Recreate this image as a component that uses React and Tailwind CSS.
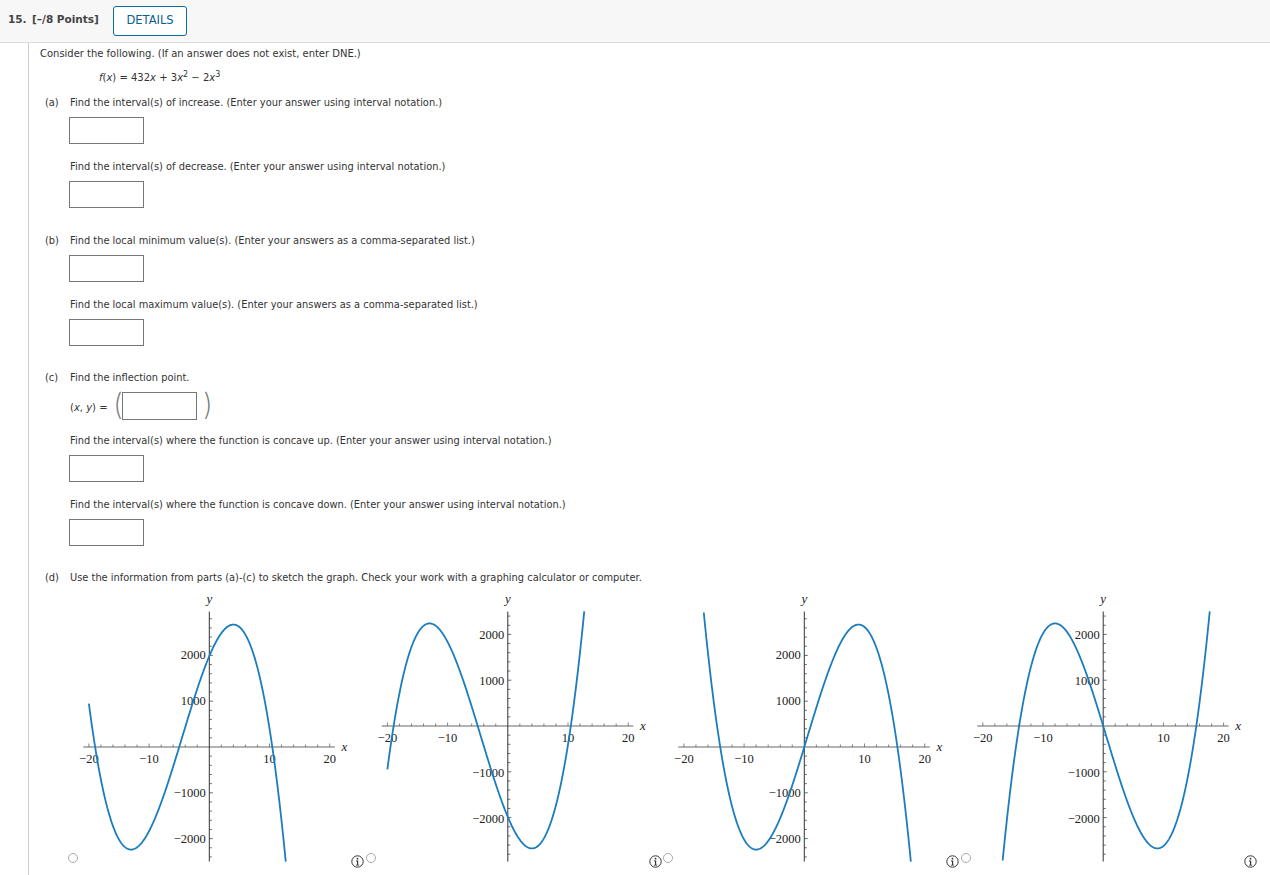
const f = (x) => 432 * x + 3 * x * x - 2 * x * x * x;

const GRAPHS = [
  { ox: 142.3, oy: 157, fn: (x) => f(x + 5), dy: 4 },
  { ox: 142.8, oy: 136, fn: (x) => -f(x + 5), dy: 5 },
  { ox: 142.3, oy: 157, fn: (x) => f(x), dy: 4 },
  { ox: 143.2, oy: 136, fn: (x) => -f(x), dy: 5 },
];

const SX = 6.02;
const SY = 0.0458;

function Graph({ ox, oy, fn, dy }) {
  const pts = [];
  for (let x = -20; x <= 20.001; x += 0.1) {
    const py = oy - fn(x) * SY;
    if (py >= 21 && py <= 272) pts.push(`${(ox + x * SX).toFixed(2)},${py.toFixed(2)}`);
  }
  const xTicks = [];
  for (let v = -20; v <= 20; v += 2) if (v !== 0) xTicks.push(v);
  const yTicks = [];
  for (let v = -5000; v <= 5000; v += 200) {
    const p = oy - v * SY;
    if (v !== 0 && p > 23 && p < 271) yTicks.push(v);
  }
  const fmt = (v) => (v < 0 ? `\u2212${-v}` : `${v}`);
  return (
    <svg width="297" height="285" className="block overflow-visible">
      <line x1={ox - 126} x2={ox + 125.5} y1={oy} y2={oy} stroke="#666" strokeWidth="1" />
      <line x1={ox} x2={ox} y1="21.5" y2="271.5" stroke="#333" strokeWidth="1" />
      {xTicks.map((v) => (
        <line key={v} x1={ox + v * SX} x2={ox + v * SX} y1={oy - (v % 10 === 0 ? 3.5 : 2.5)} y2={oy} stroke="#666" strokeWidth="0.8" />
      ))}
      {yTicks.map((v) => (
        <line key={v} x1={ox} x2={ox + (v % 1000 === 0 ? 3.5 : 2.5)} y1={oy - v * SY} y2={oy - v * SY} stroke="#444" strokeWidth="0.8" />
      ))}
      {[-20, -10, 10, 20].map((v) => (
        <text key={v} x={ox + v * SX} y={oy + 15.5} textAnchor="middle" fontSize="12.5" fill="#222" fontFamily="'Liberation Serif', serif">
          {fmt(v)}
        </text>
      ))}
      {[-2000, -1000, 1000, 2000].map((v) => (
        <text key={v} x={ox - 3.5} y={oy - v * SY + dy} textAnchor="end" fontSize="12.5" fill="#222" fontFamily="'Liberation Serif', serif">
          {fmt(v)}
        </text>
      ))}
      <text x={ox} y="13" textAnchor="middle" fontSize="13" fontStyle="italic" fill="#222" fontFamily="'Liberation Serif', serif">y</text>
      <text x={ox + 135} y={oy + 4} textAnchor="middle" fontSize="13" fontStyle="italic" fill="#222" fontFamily="'Liberation Serif', serif">x</text>
      <polyline points={pts.join(" ")} fill="none" stroke="#1b7dbe" strokeWidth="1.8" />
    </svg>
  );
}

function InfoIcon() {
  return (
    <svg width="13" height="13" viewBox="0 0 13 13" className="block">
      <circle cx="6.5" cy="6.5" r="5.7" fill="#fff" stroke="#333" strokeWidth="1" />
      <circle cx="6.5" cy="3.7" r="0.9" fill="#333" />
      <path d="M5 5.6h2.2v4.2h1v0.8H4.9v-0.8h1.1V6.4H5z" fill="#333" />
    </svg>
  );
}

const Box = () => <div className="w-[75px] h-[27px] border border-[#777] bg-white" />;

function Part({ label, children, className = "" }) {
  return (
    <div className={`flex h-[14px] leading-[16px] pl-[5px] text-[9.85px] ${className}`}>
      <span className="w-[25px]">{label}</span>
      <span>{children}</span>
    </div>
  );
}

const Sub = ({ children, className = "" }) => (
  <div className={`h-[14px] leading-[16px] pl-[30px] text-[9.85px] ${className}`}>{children}</div>
);

const Answer = ({ className = "" }) => (
  <div className={`ml-[29px] ${className}`}>
    <Box />
  </div>
);

export default function App() {
  return (
    <div className="h-[875px] w-[1270px] overflow-hidden bg-white text-[#333] text-[10px] font-['DejaVu_Sans',sans-serif]">
      <header className="h-[43px] bg-[#f7f7f7] border-b border-[#dcdcdc] flex items-center pb-[3px] pl-[8px] font-['DejaVu_Sans',sans-serif]">
        <span className="font-bold text-[10.5px] text-[#444] w-[24px]">15.</span>
        <span className="font-bold text-[10.5px] text-[#444] w-[81px] whitespace-nowrap">[–/8 Points]</span>
        <button className="w-[74px] h-[30px] mt-[3px] border border-[#0b6a9f] rounded-[3px] bg-white text-[#0b5f8f] text-[11.5px]">DETAILS</button>
      </header>
      <main className="ml-[28px] h-[832px] border-l border-[#ccc] pl-[11px] pt-[3px]">
        <div className="h-[14px] leading-[16px] text-[9.97px]">Consider the following. (If an answer does not exist, enter DNE.)</div>
        <div className="h-[14px] leading-[16px] mt-[10px] pl-[59px]">
          <i>f</i>(<i>x</i>) = 432<i>x</i> + 3<i>x</i><sup className="text-[8px]">2</sup> − 2<i>x</i><sup className="text-[8px]">3</sup>
        </div>
        <Part label="(a)" className="mt-[11px]">Find the interval(s) of increase. (Enter your answer using interval notation.)</Part>
        <Answer className="mt-[8px]" />
        <Sub className="mt-[15px]">Find the interval(s) of decrease. (Enter your answer using interval notation.)</Sub>
        <Answer className="mt-[8px]" />
        <Part label="(b)" className="mt-[25px]">Find the local minimum value(s). (Enter your answers as a comma-separated list.)</Part>
        <Answer className="mt-[8px]" />
        <Sub className="mt-[15px]">Find the local maximum value(s). (Enter your answers as a comma-separated list.)</Sub>
        <Answer className="mt-[8px]" />
        <Part label="(c)" className="mt-[24px]">Find the inflection point.</Part>
        <div className="mt-[8px] ml-[30px] h-[28px] flex items-center">
          <span className="w-[43px] whitespace-nowrap pt-[2px]">(<i>x</i>, <i>y</i>) =</span>
          <span className="w-[9px] text-[30px] leading-[28px] text-[#777] font-['Inter',sans-serif] font-extralight -mt-[4px]">(</span>
          <div className="w-[75px] h-[28px] border border-[#777] bg-white" />
          <span className="ml-[6px] text-[30px] leading-[28px] text-[#777] font-['Inter',sans-serif] font-extralight -mt-[4px]">)</span>
        </div>
        <Sub className="mt-[13px]">Find the interval(s) where the function is concave up. (Enter your answer using interval notation.)</Sub>
        <Answer className="mt-[8px]" />
        <Sub className="mt-[15px]">Find the interval(s) where the function is concave down. (Enter your answer using interval notation.)</Sub>
        <Answer className="mt-[8px]" />
        <Part label="(d)" className="mt-[24px]">Use the information from parts (a)-(c) to sketch the graph. Check your work with a graphing calculator or computer.</Part>
        <div className="mt-[6px] ml-[27px] grid grid-cols-[repeat(4,297.5px)]">
          {GRAPHS.map((g, i) => (
            <div key={i} className="relative h-[285px]">
              <Graph {...g} />
              <span className="absolute left-[1px] top-[262px] mt-[1px] w-[10px] h-[10px] rounded-full border border-[#aaa] bg-white" />
              <span className="absolute left-[284px] top-[265px]"><InfoIcon /></span>
            </div>
          ))}
        </div>
      </main>
    </div>
  );
}
